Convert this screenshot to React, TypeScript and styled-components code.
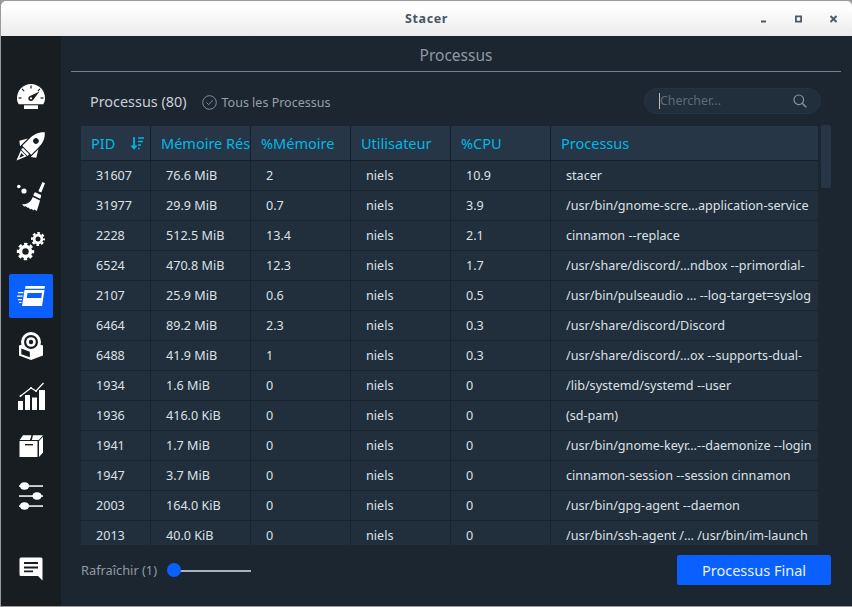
import React from "react";
import styled, { createGlobalStyle } from "styled-components";

const Global = createGlobalStyle`
  html, body { margin: 0; padding: 0; width: 852px; height: 607px; overflow: hidden; background: #8e8e8e; }
  * { box-sizing: border-box; }
`;
const FONT = `"Noto Sans", "Open Sans", "Liberation Sans", sans-serif`;
const DARK = "#171d21";
const W = "#ffffff";

const Win = styled.div`
  width: 852px; height: 607px; display: flex; flex-direction: column;
  padding: 1px 0 1px 1px; font-family: ${FONT}; background: #9a9a9a; overflow: hidden;
`;
const TitleBar = styled.div`
  height: 35px; flex: none; display: flex; align-items: center; justify-content: center; position: relative;
  background: linear-gradient(#fafafa, #ffffff 15%, #ebebeb); border-radius: 5px 5px 0 0;
  color: #4a5560; font-size: 12.5px; font-weight: 700; letter-spacing: .6px;
`;
const WinButtons = styled.div`
  position: absolute; right: 0; top: 0; height: 35px; display: flex; align-items: center;
`;
const WinBtn = styled.svg` width: 35px; height: 12px; display: block; `;
const Body = styled.div` flex: 1; display: flex; min-height: 0; `;
const Sidebar = styled.nav`
  width: 60px; flex: none; background: ${DARK}; display: flex; flex-direction: column; align-items: center;
  padding: 38px 0 9px;
`;
const NavItem = styled.div<{ $active?: boolean }>`
  width: 44px; height: 44px; flex: none; margin-bottom: 6px;
  display: flex; align-items: center; justify-content: center; border-radius: 2px;
  background: ${p => (p.$active ? "#0a60ff" : "transparent")};
  svg { display: block; overflow: visible; }
`;
const NavSpacer = styled.div` flex: 1; `;
const Main = styled.main`
  flex: 1; background: #1c2631; display: flex; flex-direction: column; padding: 0 10px 0 10px; min-width: 0;
`;
const Heading = styled.h1`
  margin: 0 1px 0 0; height: 36px; flex: none; border-bottom: 1px solid #6f8298; color: #8d98a5;
  font-size: 15.5px; font-weight: 400; text-align: center; line-height: 38px;
`;
const Toolbar = styled.div`
  height: 54px; flex: none; display: flex; align-items: center; padding: 4px 21px 0 19px;
`;
const Count = styled.span` color: #c9cfd6; font-size: 14.4px; padding-top: 1px; `;
const Check = styled.label`
  display: flex; align-items: center; gap: 5px; margin-left: 15px; color: #96a0ac; font-size: 12.5px; padding-top: 3px;
`;
const Search = styled.div`
  margin-left: auto; width: 177px; height: 26px; border-radius: 13px; background: #212e3c; border: 1px solid #263442;
  display: flex; align-items: center; padding: 0 13px 0 14px; color: #5f6b78; font-size: 12.4px;
  justify-content: space-between;
`;
const Caret = styled.span`
  border-left: 1px solid #c9b9a8; line-height: 16px; height: 16px; display: inline-block;
`;
const TableRow = styled.div` height: 419px; flex: none; display: flex; padding: 0 0 0 10px; gap: 3px; `;
const TableClip = styled.div` width: 737px; height: 419px; overflow: hidden; flex: none; `;
const Table = styled.table`
  width: 737px; border-collapse: separate; border-spacing: 0; table-layout: fixed; font-size: 12.6px; color: #dce1e6;
`;
const Th = styled.th<{ $w: number }>`
  width: ${p => p.$w}px; height: 35px; background: #263647; color: #03b8e4; font-weight: 400; font-size: 14.5px;
  text-align: left; padding: 0 0 0 10px; border-right: 1px solid #182029; border-bottom: 1px solid #182029;
  white-space: nowrap; overflow: hidden; position: relative;
  &:last-child { border-right: none; }
`;
const SortIcon = styled.svg` position: absolute; right: 5px; top: 10px; `;
const Td = styled.td`
  height: 30px; background: #212e3c; padding: 0 0 0 15px; border-right: 1px solid #1a242e; border-bottom: 1px solid #1a242e;
  white-space: nowrap; overflow: hidden;
  &:last-child { border-right: none; }
`;
const Scroll = styled.div` width: 10px; height: 63px; margin-top: -1px; background: #263647; border-radius: 2px; flex: none; `;
const Footer = styled.div`
  flex: none; height: 61px; display: flex; align-items: center; padding: 0 11px 11px 10px;
`;
const RefreshLabel = styled.span` color: #8f9aa6; font-size: 12.8px; `;
const Slider = styled.div`
  width: 84px; height: 14px; margin-left: 10px; display: flex; align-items: center; position: relative; top: 0;
`;
const Track = styled.div` margin: 1px 0 0 2px; flex: 1; height: 2px; background: #a9b3bd; `;
const Thumb = styled.div`
  position: absolute; left: 0; top: 0; width: 14px; height: 14px; border-radius: 50%; background: #0a60ff;
`;
const FinalBtn = styled.button`
  margin-left: auto; width: 154px; height: 30px; background: #0a60ff; border: none; border-radius: 2px; color: #e9f0fb;
  font: 400 14.5px ${FONT}; padding: 0;
`;

const Dash = () => (
  <svg width="28" height="25" viewBox="0 0 28 25">
    <path fill={W} d="M14 0C6 0 0 6.500 0 14c0 2.500.6 4.500 1.700 6.200h24.600C27.400 18.500 28 16.500 28 14 28 6.500 22 0 14 0z" />
    <path fill={DARK} d="M22.500 7.500 12.500 12.300a2.600 2.600 0 1 0 3.600 3.600z" />
    <circle cx="14" cy="14.300" r="1.100" fill={W} />
    <g fill={DARK}>
      <rect x="13.400" y="1.500" width="1.200" height="3" />
      <rect x="5.500" y="4.500" width="1.200" height="3" transform="rotate(-45 6.100 6)" />
      <rect x="21.300" y="4.500" width="1.200" height="3" transform="rotate(45 21.900 6)" />
      <rect x="1.500" y="13.400" width="3" height="1.200" />
      <rect x="23.500" y="13.400" width="3" height="1.200" />
    </g>
    <rect x="7" y="21.300" width="14" height="3.700" fill={W} />
  </svg>
);
const Rocket = () => (
  <svg width="28" height="28" viewBox="0 0 28 28">
    <g transform="rotate(45 14 14)">
      <path fill={W} d="M14-5.500C19-1 20.300 4 20.300 10V20H7.700V10C7.700 4 9-1 14-5.500z" />
      <circle cx="14" cy="7" r="2.800" fill={DARK} />
      <path fill={W} d="M6.500 11 2 18.500l4.500 3.500zM21.500 11 26 18.500 21.500 22z" />
      <rect x="9.500" y="21" width="9" height="2.500" fill={W} />
      <path fill="none" stroke={W} strokeWidth="1.500" d="M11 25h6l-3 7.500z" />
    </g>
  </svg>
);
const Broom = () => (
  <svg width="28" height="29" viewBox="0 0 28 29">
    <circle cx="1.800" cy="4.500" r="1.800" fill={W} />
    <circle cx="7" cy="9" r="2.600" fill={W} />
    <path fill={W} d="M25.500 0 28 1.300 24.300 10.500 21.300 9.200z" />
    <path fill={W} d="M18.200 10.300 24 13c.4 1.500-.2 2.900-.9 3.800L16.400 13.600c.1-1.400.8-2.600 1.800-3.300z" />
    <path fill={W} d="M15.700 15 23 18.500c-.8 3-2.200 7.500-3.200 10.500l-2.500-1.500-.8 1-2.200-1.700-.8.700-2.200-2-1 .3-1.300-1.600-2 .2-2-2.200c5 .5 8.700-2 10.700-7.200z" />
  </svg>
);
const Gears = () => (
  <svg width="28" height="28" viewBox="0 0 28 28">
    <circle cx="8.500" cy="19.500" r="6.700" fill={W} />
    <circle cx="8.500" cy="19.500" r="7.500" fill="none" stroke={W} strokeWidth="2.400" strokeDasharray="3.400 2.490" strokeDashoffset="1.700" />
    <circle cx="8.500" cy="19.500" r="3.200" fill={DARK} />
    <circle cx="21" cy="7" r="5.300" fill={W} />
    <circle cx="21" cy="7" r="6" fill="none" stroke={W} strokeWidth="2" strokeDasharray="2.700 2" strokeDashoffset="1.350" />
    <circle cx="21" cy="7" r="2.500" fill={DARK} />
  </svg>
);
const Procs = () => (
  <svg width="28" height="20" viewBox="0 0 28 20">
    <path fill={W} d="M8.500 0H28l-.5 2.800H8z" />
    <path fill={W} d="M7.500 4H27.500L25 20H5z" />
    <path fill="#0a60ff" d="M10.500 7H25L24.200 12H9.700z" />
    <path fill={W} d="M1 6H6.500V7.200H1zM0 9.500H5.500V10.700H0zM1 13H5V14.200H1zM2 16H4.500V17H2z" />
  </svg>
);
const Disk = () => (
  <svg width="24" height="28" viewBox="0 0 24 28">
    <path fill={W} d="M0 13.500 12 10 24 13.500V23.500L12 28 0 23.500z" />
    <circle cx="12" cy="10" r="10" fill={W} />
    <circle cx="12" cy="10" r="7" fill={DARK} />
    <circle cx="12" cy="10" r="4.800" fill={W} />
    <circle cx="12" cy="10" r="2.200" fill={DARK} />
    <path fill={W} d="M1 14.500 12 20 23 14.500 20 12.500C18 16 15 17.800 12 17.800S6 16 4 12.500z" />
    <path fill={DARK} d="M2.300 16.500 10.800 19.700V25.200L2.300 22.200z" />
  </svg>
);
const Chart = () => (
  <svg width="27" height="27" viewBox="0 0 27 27">
    <path fill="none" stroke={W} strokeWidth="1.200" d="M2.500 13 13 5l5 3L25.500 0" />
    <circle cx="2.500" cy="13" r="1" fill={W} />
    <circle cx="13" cy="5" r="1" fill={W} />
    <circle cx="18" cy="8" r="1" fill={W} />
    <g fill={W}>
      <rect x="0" y="18" width="5" height="9" />
      <rect x="7" y="12" width="5" height="15" />
      <rect x="14" y="14.500" width="5" height="12.500" />
      <rect x="21" y="7" width="6" height="20" />
    </g>
  </svg>
);
const Box = () => (
  <svg width="24" height="22" viewBox="0 0 24 22">
    <path fill={W} d="M4 .2h8.500L11 5H.7zM14 .2H24L19.800 5H12.800z" />
    <path fill={W} d="M.5 6H18.500V22H.5z" />
    <path fill={W} d="M20 6 24 1.800V17.500L20 22z" />
    <rect x="6" y="9" width="8" height="1.400" fill={DARK} />
  </svg>
);
const Sliders = () => (
  <svg width="24" height="28" viewBox="0 0 24 28">
    <g fill={W}>
      <rect x="0" y="3.300" width="24" height="1.500" /><ellipse cx="5.500" cy="4" rx="4.500" ry="3.700" />
      <rect x="0" y="13.300" width="24" height="1.500" /><ellipse cx="18" cy="14" rx="4.500" ry="3.700" />
      <rect x="0" y="23.300" width="24" height="1.500" /><ellipse cx="5.500" cy="24" rx="4.500" ry="3.700" />
    </g>
  </svg>
);
const Chat = () => (
  <svg width="24" height="24" viewBox="0 0 24 24">
    <path fill={W} fillRule="evenodd" d="M2 .5h20a1.500 1.500 0 0 1 1.500 1.500v21.500L19 19H2a1.500 1.500 0 0 1-1.500-1.500V2A1.500 1.500 0 0 1 2 .5zM5 5v2h14V5zm0 4.500v2h14v-2zm0 4v1.800h9v-1.800z" />
  </svg>
);

const rows: string[][] = [
  ["31607", "76.6 MiB", "2", "niels", "10.9", "stacer"],
  ["31977", "29.9 MiB", "0.7", "niels", "3.9", "/usr/bin/gnome-scre…application-service"],
  ["2228", "512.5 MiB", "13.4", "niels", "2.1", "cinnamon --replace"],
  ["6524", "470.8 MiB", "12.3", "niels", "1.7", "/usr/share/discord/…ndbox --primordial-"],
  ["2107", "25.9 MiB", "0.6", "niels", "0.5", "/usr/bin/pulseaudio … --log-target=syslog"],
  ["6464", "89.2 MiB", "2.3", "niels", "0.3", "/usr/share/discord/Discord"],
  ["6488", "41.9 MiB", "1", "niels", "0.3", "/usr/share/discord/…ox --supports-dual-"],
  ["1934", "1.6 MiB", "0", "niels", "0", "/lib/systemd/systemd --user"],
  ["1936", "416.0 KiB", "0", "niels", "0", "(sd-pam)"],
  ["1941", "1.7 MiB", "0", "niels", "0", "/usr/bin/gnome-keyr…--daemonize --login"],
  ["1947", "3.7 MiB", "0", "niels", "0", "cinnamon-session --session cinnamon"],
  ["2003", "164.0 KiB", "0", "niels", "0", "/usr/bin/gpg-agent --daemon"],
  ["2013", "40.0 KiB", "0", "niels", "0", "/usr/bin/ssh-agent /… /usr/bin/im-launch"],
];
const cols: [string, number][] = [["PID", 70], ["Mémoire Rés", 100], ["%Mémoire", 100], ["Utilisateur", 100], ["%CPU", 100], ["Processus", 267]];

export default function App() {
  return (
    <Win>
      <Global />
      <TitleBar>
        Stacer
        <WinButtons>
          <WinBtn viewBox="0 0 35 12"><rect x="14" y="7.500" width="5" height="2" fill="#4f5b66" /></WinBtn>
          <WinBtn viewBox="0 0 35 12"><rect x="13.900" y="3.400" width="5.200" height="5.200" fill="none" stroke="#4f5b66" strokeWidth="1.800" /></WinBtn>
          <WinBtn viewBox="0 0 35 12"><path d="M13.500 3l6 6M19.500 3l-6 6" stroke="#4f5b66" strokeWidth="2" /></WinBtn>
        </WinButtons>
      </TitleBar>
      <Body>
        <Sidebar>
          <NavItem><Dash /></NavItem>
          <NavItem><Rocket /></NavItem>
          <NavItem><Broom /></NavItem>
          <NavItem><Gears /></NavItem>
          <NavItem $active><Procs /></NavItem>
          <NavItem><Disk /></NavItem>
          <NavItem><Chart /></NavItem>
          <NavItem><Box /></NavItem>
          <NavItem><Sliders /></NavItem>
          <NavSpacer />
          <NavItem><Chat /></NavItem>
        </Sidebar>
        <Main>
          <Heading>Processus</Heading>
          <Toolbar>
            <Count>Processus (80)</Count>
            <Check>
              <svg width="15" height="15" viewBox="0 0 15 15"><circle cx="7.500" cy="7.500" r="6.800" fill="none" stroke="#7f8a97" /><path d="M4.500 7.500l2.200 2.200 4-4.400" fill="none" stroke="#7f8a97" /></svg>
              Tous les Processus
            </Check>
            <Search>
              <Caret>Chercher...</Caret>
              <svg width="14" height="14" viewBox="0 0 14 14"><circle cx="5.800" cy="5.800" r="4.800" fill="none" stroke="#8492a1" strokeWidth="1.200" /><path d="M9.300 9.300l4 4" stroke="#8492a1" strokeWidth="1.500" /></svg>
            </Search>
          </Toolbar>
          <TableRow>
            <TableClip>
              <Table>
                <thead>
                  <tr>
                    {cols.map(([c, w], i) => (
                      <Th key={c} $w={w}>
                        {c}
                        {i === 0 && (
                          <SortIcon width="14" height="15" viewBox="0 0 14 15">
                            <path d="M3 1v11M.5 9.500 3 12.500l2.500-3" fill="none" stroke="#03b8e4" strokeWidth="1.700" />
                            <path d="M7 2h6M7 5.500h5M7 9h3M7 12.500h1.500" stroke="#03b8e4" strokeWidth="1.600" />
                          </SortIcon>
                        )}
                      </Th>
                    ))}
                  </tr>
                </thead>
                <tbody>
                  {rows.map(r => (
                    <tr key={r[0]}>{r.map((v, i) => <Td key={i}>{v}</Td>)}</tr>
                  ))}
                </tbody>
              </Table>
            </TableClip>
            <Scroll />
          </TableRow>
          <Footer>
            <RefreshLabel>Rafraîchir (1)</RefreshLabel>
            <Slider><Track /><Thumb /></Slider>
            <FinalBtn>Processus Final</FinalBtn>
          </Footer>
        </Main>
      </Body>
    </Win>
  );
}
